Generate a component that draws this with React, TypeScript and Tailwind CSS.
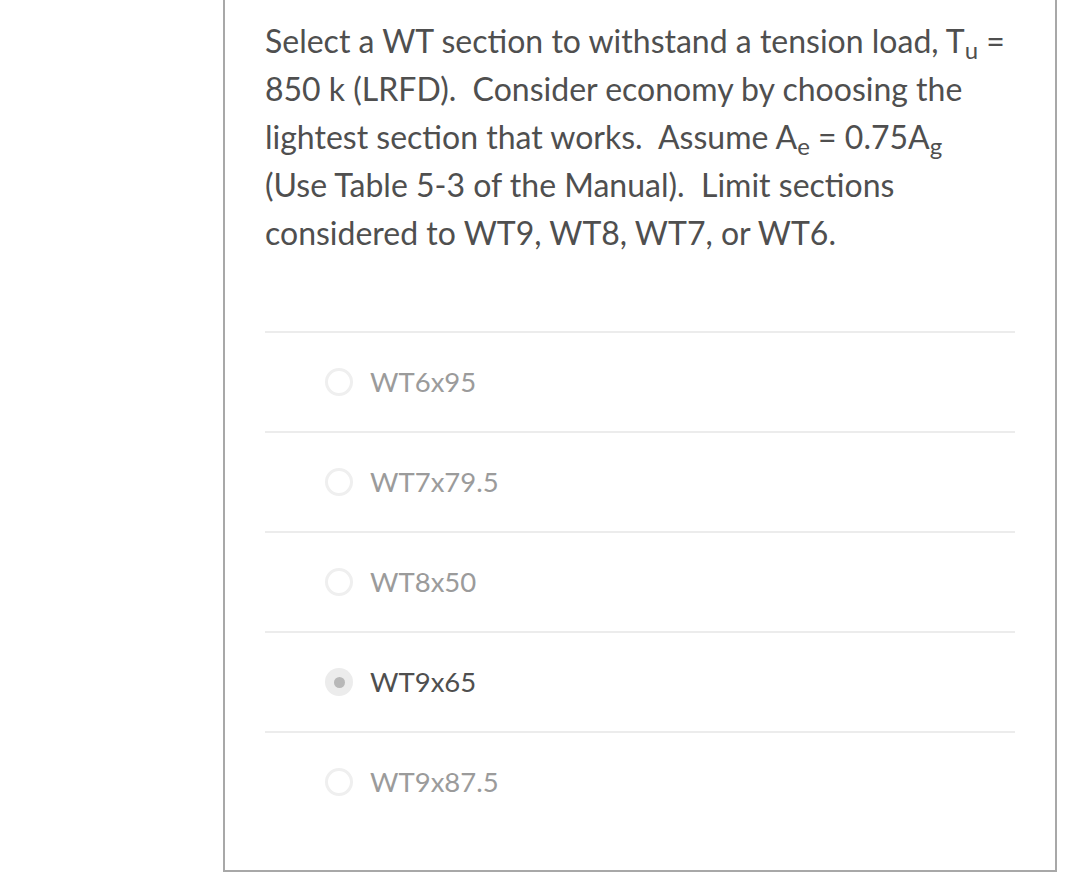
import React, { useState } from 'react';

const options = ['WT6x95', 'WT7x79.5', 'WT8x50', 'WT9x65', 'WT9x87.5'];

function Sub({ children }: { children: React.ReactNode }) {
  return <span className="relative top-[6px] text-[24px] leading-none">{children}</span>;
}

export default function App() {
  const [picked, setPicked] = useState('WT9x65');

  return (
    <div className="min-h-screen bg-white font-['Lato','Liberation_Sans',sans-serif]">
      <div className="ml-[223px] w-[834px] border-2 border-t-0 border-[#a8a8a8] px-[40px] pt-[17px] pb-[39px]">
        <p className="text-[32px] leading-[48px] text-[#4f4f4f]">
          Select a WT section to withstand a tension load, T<Sub>u</Sub> =<br />
          850 k (LRFD).&nbsp; Consider economy by choosing the
          <br />
          lightest section that works.&nbsp; Assume A<Sub>e</Sub> = 0.75A<Sub>g</Sub>
          <br />
          (Use Table 5-3 of the Manual).&nbsp; Limit sections
          <br />
          considered to WT9, WT8, WT7, or WT6.
        </p>

        <ul className="mt-[74px]">
          {options.map((opt) => {
            const on = opt === picked;
            return (
              <li key={opt} className="border-t-2 border-[#ececec]">
                <label className="flex h-[98px] cursor-pointer items-center pl-[60px]">
                  <input
                    type="radio"
                    name="wt"
                    className="sr-only"
                    checked={on}
                    onChange={() => setPicked(opt)}
                  />
                  <span
                    className={
                      on
                        ? 'flex h-[28px] w-[28px] items-center justify-center rounded-full bg-[#ececec]'
                        : 'h-[28px] w-[28px] rounded-full border-[3px] border-[#efefef]'
                    }
                  >
                    {on && <span className="h-[11px] w-[11px] rounded-full bg-[#b8b8b8]" />}
                  </span>
                  <span
                    className={
                      on
                        ? 'ml-[17px] text-[27.5px] text-[#4f4f4f]'
                        : 'ml-[17px] text-[27.5px] text-[#9b9b9b]'
                    }
                  >
                    {opt}
                  </span>
                </label>
              </li>
            );
          })}
        </ul>
      </div>
    </div>
  );
}
